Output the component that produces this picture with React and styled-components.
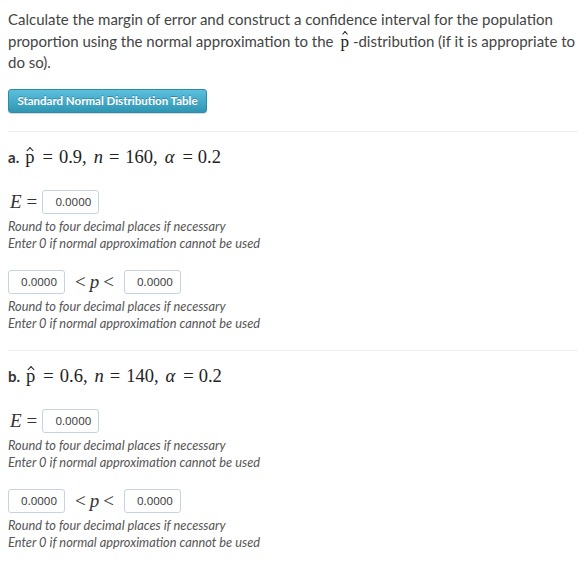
import React from "react";
import styled, { createGlobalStyle } from "styled-components";

const GlobalStyle = createGlobalStyle`
  body {
    margin: 0;
    background: #fff;
    font-family: Lato, "Open Sans", sans-serif;
    color: #444;
  }
`;

const Page = styled.div`
  padding: 9px 8px 20px 8px;
  width: 570px;
`;

const Intro = styled.p`
  margin: 0;
  font-size: 15px;
  line-height: 21.5px;
  color: #444;
`;

// p with a hat drawn over it
const HatP = styled.span`
  position: relative;
  font-family: "Liberation Serif", "DejaVu Serif", serif;
  font-size: ${(p) => p.size || 18}px;
  color: #222;
  margin: ${(p) => p.m || "0"};

  &::before {
    content: "";
    position: absolute;
    left: 50%;
    top: ${(p) => p.hatTop || "0.02em"};
    width: 0.2em;
    height: 0.2em;
    border-left: 1px solid currentColor;
    border-top: 1px solid currentColor;
    transform: translateX(-50%) rotate(45deg);
  }
`;

const InfoButton = styled.button`
  display: block;
  margin-top: 15px;
  width: 199px;
  height: 24px;
  padding: 0;
  border: 1px solid #2f8aa5;
  border-radius: 3px;
  background: linear-gradient(to bottom, #5bc0de, #2f96b4);
  box-shadow: 0 1px 1px rgba(0, 0, 0, 0.15);
  color: #fff;
  font-family: Lato, "Open Sans", sans-serif;
  font-size: 11.5px;
  font-weight: 700;
  text-shadow: 0 -1px 0 rgba(0, 0, 0, 0.25);
`;

const Divider = styled.hr`
  margin: 18px 0 0 0;
  border: 0;
  border-top: 1px solid #eee;
`;

const Part = styled.section`
  padding-top: 15px;
`;

const PartHead = styled.div`
  display: flex;
  align-items: baseline;
  height: 22px;
  font-family: "Liberation Serif", "DejaVu Serif", serif;
  font-size: 18.5px;
  color: #222;
`;

const PartLabel = styled.b`
  font-family: Lato, "Open Sans", sans-serif;
  font-size: 15px;
  font-weight: 700;
  color: #333;
  margin-right: 6px;
`;

const Mi = styled.i`
  font-style: italic;
`;

const Tok = styled.span`
  margin-left: ${(p) => p.l || 0}px;
`;

const AnswerRow = styled.div`
  display: flex;
  align-items: center;
  margin-top: ${(p) => p.top}px;
  font-family: "Liberation Serif", "DejaVu Serif", serif;
  font-size: 19px;
  color: #333;
`;

const Rel = styled.span`
  margin: 0 ${(p) => p.r || 0}px 0 ${(p) => p.l || 0}px;
  white-space: pre;
`;

const Box = styled.div`
  box-sizing: border-box;
  width: 57px;
  height: 24px;
  border: 1px solid #c5d3e3;
  border-radius: 3px;
  padding: 0 7px;
  display: flex;
  align-items: center;
  justify-content: flex-end;
  font-family: "Open Sans", "Noto Sans", sans-serif;
  font-size: 11.5px;
  color: #333;
  background: #fff;
`;

const Note = styled.div`
  margin-top: 4px;
  font-style: italic;
  font-size: 12.8px;
  line-height: 17px;
  color: #555;
`;

const notes = (
  <Note>
    Round to four decimal places if necessary
    <br />
    Enter 0 if normal approximation cannot be used
  </Note>
);

const Question = ({ label, phat, n, alpha }) => (
  <Part>
    <PartHead>
      <PartLabel>{label}.</PartLabel>
      <HatP size={18.5} hatTop="0.1em">
        p
      </HatP>
      <Tok l={8}>=</Tok>
      <Tok l={6}>{phat},</Tok>
      <Tok l={7}>
        <Mi>n</Mi>
      </Tok>
      <Tok l={6}>=</Tok>
      <Tok l={6}>{n},</Tok>
      <Tok l={7}>
        <Mi>α</Mi>
      </Tok>
      <Tok l={8}>=</Tok>
      <Tok l={5}>{alpha}</Tok>
    </PartHead>
    <AnswerRow top={21}>
      <Rel l={2}>
        <Mi>E</Mi>
      </Rel>
      <Rel l={5} r={5}>
        =
      </Rel>
      <Box>0.0000</Box>
    </AnswerRow>
    {notes}
    <AnswerRow top={18}>
      <Box>0.0000</Box>
      <Rel l={10}>&lt;</Rel>
      <Rel l={4}>
        <Mi>p</Mi>
      </Rel>
      <Rel l={4} r={10}>
        &lt;
      </Rel>
      <Box>0.0000</Box>
    </AnswerRow>
    {notes}
  </Part>
);

export default function App() {
  return (
    <Page>
      <GlobalStyle />
      <Intro>
        Calculate the margin of error and construct a confidence interval for
        the population proportion using the normal approximation to the{" "}
        <HatP size={17} m="0 4px 0 3px" hatTop="0.05em">
          p
        </HatP>
        -distribution (if it is appropriate to do so).
      </Intro>
      <InfoButton>Standard Normal Distribution Table</InfoButton>
      <Divider />
      <Question label="a" phat="0.9" n="160" alpha="0.2" />
      <Divider />
      <Question label="b" phat="0.6" n="140" alpha="0.2" />
    </Page>
  );
}
